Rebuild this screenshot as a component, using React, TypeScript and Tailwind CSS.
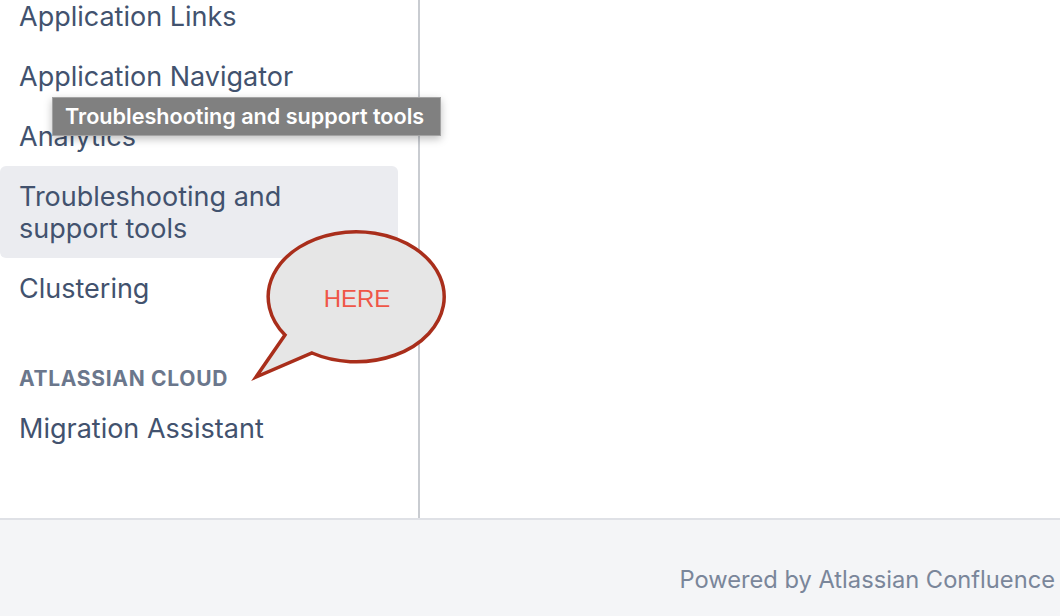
const items = ["Application Links", "Application Navigator", "Analytics"]

function NavItem({ label, active = false }: { label: string; active?: boolean }) {
  return (
    <a
      href="#"
      className={
        "block rounded-md px-[19px] pt-[15px] pb-[13px] text-[27px] leading-[32px] text-[#42526e] " +
        (active ? "bg-[#ebecf0]" : "")
      }
    >
      {label}
    </a>
  )
}

function SpeechBubble() {
  return (
    <svg
      className="absolute left-[250px] top-[225px]"
      width="205"
      height="160"
      viewBox="0 0 205 160"
    >
      <path
        d="M 35 110 L 6 152 L 62 128 A 88 65 0 1 0 35 110 Z"
        fill="#e6e6e6"
        stroke="#a92e1b"
        strokeWidth="3.5"
        strokeLinejoin="miter"
      />
      <text
        x="107"
        y="82"
        textAnchor="middle"
        fontFamily="'Liberation Sans', Arial, sans-serif"
        fontSize="24"
        fill="#ef5748"
      >
        HERE
      </text>
    </svg>
  )
}

export default function App() {
  return (
    <div className="relative flex h-[616px] w-[1060px] flex-col overflow-hidden bg-white font-['Inter',sans-serif]">
      <div className="flex h-[518px] shrink-0">
        <aside className="w-[420px] shrink-0 overflow-hidden border-r-2 border-[#c9ccd1] pr-[20px]">
          <nav className="-mt-[14px]">
            {items.map((label) => (
              <NavItem key={label} label={label} />
            ))}
            <NavItem label="Troubleshooting and support tools" active />
            <NavItem label="Clustering" />
            <h3 className="px-[19px] pt-[47px] pb-[5px] text-[21px] font-bold uppercase leading-[28px] tracking-[0.7px] text-[#6b778c]">
              Atlassian Cloud
            </h3>
            <NavItem label="Migration Assistant" />
          </nav>
        </aside>
        <main className="flex-1" />
      </div>

      <footer className="flex-1 border-t-2 border-[#dfe1e6] bg-[#f4f5f7] pr-[5px] pt-[44px] text-right text-[23.7px] leading-[32px] text-[#7a869a]">
        Powered by Atlassian Confluence
      </footer>

      <div className="absolute left-[52px] top-[97px] flex h-[39px] w-[389px] items-center border border-[#a3a3a3] bg-[#808080] pl-[12px] text-[21.6px] font-semibold text-white shadow-[0_3px_8px_rgba(0,0,0,0.25)]">
        Troubleshooting and support tools
      </div>

      <SpeechBubble />
    </div>
  )
}
